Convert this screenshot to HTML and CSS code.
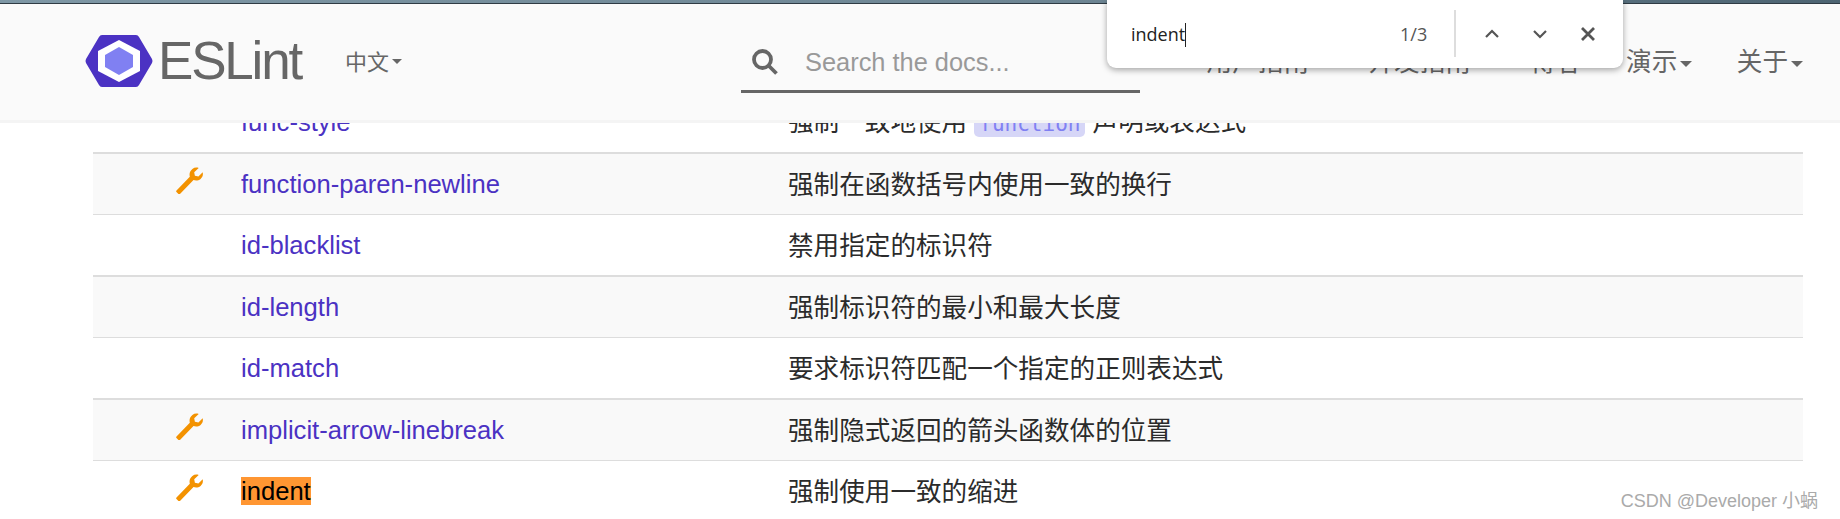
FILE: index.html
```html
<!DOCTYPE html>
<html lang="zh">
<head>
<meta charset="utf-8">
<title>ESLint rules</title>
<link rel="stylesheet" href="styles.css">
</head>
<body>
<div class="window-strip"></div>
<main class="content">
  <div class="rule-table">
    <div class="rule cut">
      <span class="fix"></span>
      <a class="name">func-style</a>
      <span class="desc">强制一致地使用 <code>function</code> 声明或表达式</span>
    </div>
    <div class="rule shaded thick">
      <span class="fix"><svg class="wrench" viewBox="0 0 28 28"><path d="M1.500 24.500 14.800 10.800c-.8-3.400.2-6.100 2.600-7.900 1.900-1.400 4.200-1.700 6.300-.9l-4.500 4.300.7 3.400 3.500.9 4.300-4.300c.6 2.700-.2 5-2.100 6.600-2.100 1.800-4.800 2.100-7.100 1.200L5.200 27.700c-.6.600-1.400.6-2 0l-1.700-1.600c-.5-.5-.5-1.100 0-1.600z"/></svg></span>
      <a class="name">function-paren-newline</a>
      <span class="desc">强制在函数括号内使用一致的换行</span>
    </div>
    <div class="rule">
      <span class="fix"></span>
      <a class="name">id-blacklist</a>
      <span class="desc">禁用指定的标识符</span>
    </div>
    <div class="rule shaded thick">
      <span class="fix"></span>
      <a class="name">id-length</a>
      <span class="desc">强制标识符的最小和最大长度</span>
    </div>
    <div class="rule">
      <span class="fix"></span>
      <a class="name">id-match</a>
      <span class="desc">要求标识符匹配一个指定的正则表达式</span>
    </div>
    <div class="rule shaded thick">
      <span class="fix"><svg class="wrench" viewBox="0 0 28 28"><path d="M1.500 24.500 14.800 10.800c-.8-3.400.2-6.100 2.600-7.900 1.900-1.400 4.200-1.700 6.300-.9l-4.500 4.300.7 3.400 3.500.9 4.300-4.300c.6 2.700-.2 5-2.100 6.600-2.100 1.800-4.800 2.100-7.100 1.200L5.200 27.700c-.6.600-1.400.6-2 0l-1.700-1.600c-.5-.5-.5-1.100 0-1.600z"/></svg></span>
      <a class="name">implicit-arrow-linebreak</a>
      <span class="desc">强制隐式返回的箭头函数体的位置</span>
    </div>
    <div class="rule">
      <span class="fix"><svg class="wrench" viewBox="0 0 28 28"><path d="M1.500 24.500 14.800 10.800c-.8-3.400.2-6.100 2.600-7.900 1.900-1.400 4.200-1.700 6.300-.9l-4.500 4.300.7 3.400 3.500.9 4.300-4.300c.6 2.700-.2 5-2.100 6.600-2.100 1.800-4.800 2.100-7.100 1.200L5.200 27.700c-.6.600-1.400.6-2 0l-1.700-1.600c-.5-.5-.5-1.100 0-1.600z"/></svg></span>
      <a class="name"><mark>indent</mark></a>
      <span class="desc">强制使用一致的缩进</span>
    </div>
  </div>
</main>
<header class="navbar">
  <div class="brand">
    <svg class="logo" viewBox="0 0 68 54"><path class="logo-outer" d="M17 1h34q2 0 3 2l13 22q1 2 0 4L54 51q-1 2-3 2H17q-2 0-3-2L1 29q-1-2 0-4L14 3q1-2 3-2z"/><path class="logo-ring" d="M34 6 55 17V37L34 48 13 37V17z"/><path class="logo-core" d="M34 13 48 21V33L34 41 20 33V21z"/></svg>
    <span class="wordmark">ESLint</span>
    <span class="lang">中文<i class="caret small"></i></span>
  </div>
  <div class="search">
    <svg class="search-icon" viewBox="0 0 28 28"><circle cx="11.500" cy="11.500" r="8.500"/><path d="M18 18l7.500 7.500"/></svg>
    <span class="placeholder">Search the docs...</span>
  </div>
  <nav class="menu">
    <span class="item">用户指南<i class="caret"></i></span>
    <span class="item">开发指南<i class="caret"></i></span>
    <span class="item">博客</span>
    <span class="item">演示<i class="caret"></i></span>
    <span class="item">关于<i class="caret"></i></span>
  </nav>
</header>
<div class="findbar">
  <span class="find-text">indent</span>
  <span class="find-count">1/3</span>
  <span class="find-sep"></span>
  <span class="find-buttons">
    <svg viewBox="0 0 16 16"><path d="M2 11 8 5 14 11"/></svg>
    <svg viewBox="0 0 16 16"><path d="M2 5 8 11 14 5"/></svg>
    <svg class="close" viewBox="0 0 16 16"><path d="M2 2 14 14M14 2 2 14"/></svg>
  </span>
</div>
<div class="watermark">CSDN @Developer 小蜗</div>
</body>
</html>
```
FILE: styles.css
```css
* { box-sizing: border-box; }
html, body { margin: 0; height: 519px; overflow: hidden; background: #fff; }
body { font-family: "Liberation Sans", "Noto Sans CJK SC", sans-serif; color: #333; position: relative; }
.window-strip { height: 4px; background: linear-gradient(90deg, #7e97a5, #6c8492 60%, #4d6472); border-bottom: 1px solid #2f3b44; }
.content { padding: 0 37px 0 93px; margin-top: 86.500px; }
.rule { display: grid; grid-template-columns: 148px 547px 1fr; height: 61.500px; align-items: center; border-top: 1px solid #ddd; font-size: 25.600px; }
.rule.thick { border-top-width: 2px; }
.rule.cut { border-top: 0; }
.rule.shaded { background: #f9f9f9; }
.fix { display: flex; justify-content: flex-end; padding-right: 38px; }
.wrench { width: 28px; height: 28px; fill: #f39200; display: block; margin-top: -7px; }
.name { color: #4b32c3; padding-top: 2px; }
.desc { color: #2b2b2b; padding-bottom: 3px; }
mark { background: #ff9632; color: #000; }
code { font-family: "DejaVu Sans Mono", monospace; font-size: 21px; color: #8080f2; background: #d6d6f7; border-radius: 5px; padding: 1px 5px; }
.navbar { position: absolute; top: 4px; left: 0; right: 0; height: 119px; background: #fafafa; border-bottom: 3px solid #f4f4f4; display: flex; align-items: flex-start; padding: 0 37px 0 85px; }
.brand { display: flex; align-items: center; width: 656px; margin-top: 26px; }
.logo { width: 68px; height: 54px; flex: none; }
.logo-outer { fill: #4b32c3; }
.logo-ring { fill: #fff; }
.logo-core { fill: #8080f2; }
.wordmark { font-size: 53px; letter-spacing: -2.200px; color: #666; margin-left: 5px; }
.lang { font-size: 22px; color: #666; margin: -2px 0 0 44px; display: inline-flex; align-items: center; }
.search { width: 399px; height: 61px; margin-top: 28px; padding: 2px 0 0 10px; border-bottom: 3px solid #666; display: flex; align-items: center; flex: none; }
.search-icon { width: 28px; height: 28px; fill: none; stroke: #666; stroke-width: 3.800px; flex: none; }
.placeholder { font-size: 25.400px; color: #999; margin-left: 26px; }
.menu { margin-left: auto; margin-top: 42px; display: flex; gap: 44.500px; font-size: 25.600px; line-height: 32px; color: #666; }
.item { display: inline-flex; align-items: center; }
.caret { display: inline-block; width: 0; height: 0; margin-left: 3px; border-top: 6px solid #666; border-left: 6px solid transparent; border-right: 6px solid transparent; margin-top: 3px; }
.caret.small { border-top-width: 5px; border-left-width: 5px; border-right-width: 5px; }
.findbar { position: absolute; top: 0; left: 1107px; width: 516px; height: 68px; background: #fff; border-radius: 0 0 9px 9px; box-shadow: 0 2px 6px rgba(0,0,0,.35); display: flex; align-items: center; padding: 0 0 0 24px; font-family: "Open Sans", sans-serif; font-size: 18px; }
.find-text { color: #222; width: 269px; }
.find-text::after { content: ""; display: inline-block; width: 1px; height: 24px; background: #222; vertical-align: -6px; }
.find-count { color: #555; width: 54px; }
.find-sep { width: 2px; height: 47px; background: #ddd; margin-top: -1px; }
.find-buttons { display: flex; gap: 32px; margin-left: 28px; }
.find-buttons svg { width: 16px; height: 16px; fill: none; stroke: #555; stroke-width: 2.200px; display: block; }
.find-buttons .close { stroke-width: 2.800px; }
.watermark { position: absolute; right: 22px; top: 486px; font-size: 18px; color: #aaa; }
```
